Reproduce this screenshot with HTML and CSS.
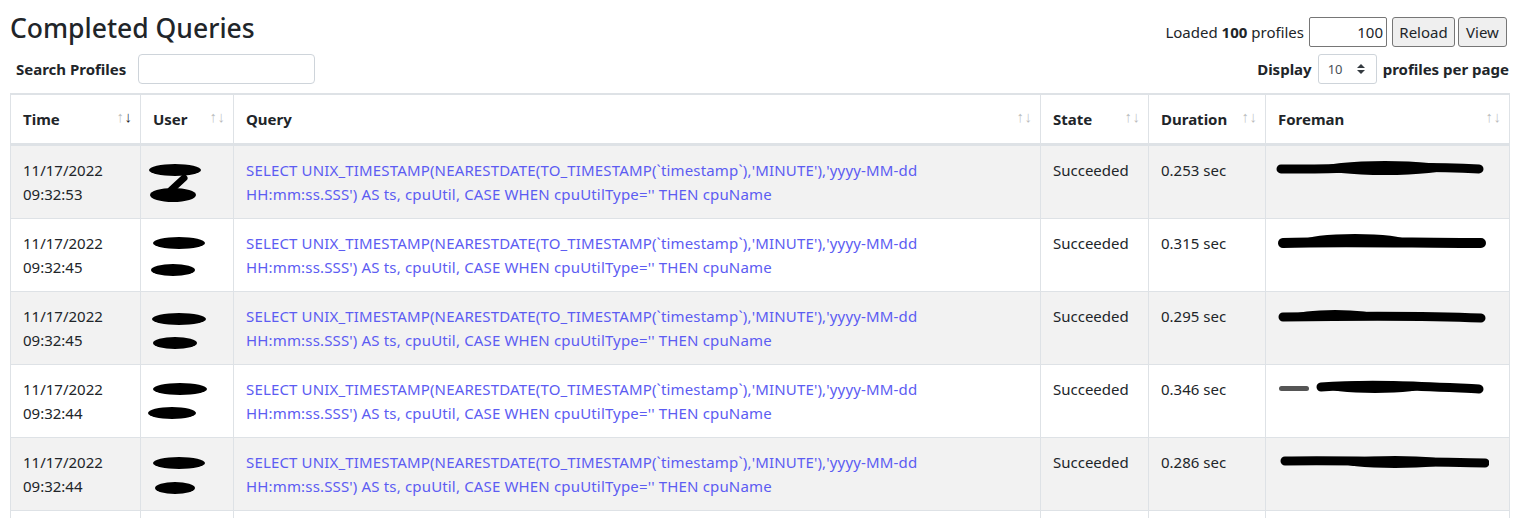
FILE: index.html
```html
<!DOCTYPE html>
<html lang="en">
<head>
  <meta charset="UTF-8">
  <meta name="viewport" content="width=device-width, initial-scale=1.0">
  <title>Completed Queries</title>
  <link rel="stylesheet" href="styles.css">
</head>
<body>
  <div class="page">
    <div class="top-row">
      <h3 class="title">Completed Queries</h3>
      <div class="loader">
        <span class="loaded">Loaded <b>100</b> profiles</span>
        <input class="max-input" type="text" value="100">
        <button class="btn btn-reload">Reload</button>
        <button class="btn btn-view">View</button>
      </div>
    </div>

    <div class="filter-row">
      <label class="search">
        <span class="label">Search Profiles</span>
        <input class="search-input" type="text">
      </label>
      <div class="display">
        <span class="label">Display</span>
        <span class="select-wrap">
          <select class="page-size">
            <option>10</option>
            <option>25</option>
            <option>50</option>
          </select>
          <svg class="select-arrows" width="8" height="10" viewBox="0 0 4 5"><path fill="#343a40" d="M2 0L0 2h4zm0 5L0 3h4z"/></svg>
        </span>
        <span class="label">profiles per page</span>
      </div>
    </div>

    <table class="profiles">
      <thead>
        <tr>
          <th class="col-time sort sort-desc">Time</th>
          <th class="col-user sort">User</th>
          <th class="col-query sort">Query</th>
          <th class="col-state sort">State</th>
          <th class="col-duration sort">Duration</th>
          <th class="col-foreman sort">Foreman</th>
        </tr>
      </thead>
      <tbody>
        <tr class="odd">
          <td>11/17/2022<br>09:32:53</td>
          <td>
            <svg class="redact-user" width="70" height="48" viewBox="0 0 70 48">
              <ellipse cx="28" cy="12" rx="26" ry="6"/>
              <path d="M37 20 L24 32" stroke="#000" stroke-width="7" stroke-linecap="round"/>
              <ellipse cx="26" cy="37" rx="23" ry="7"/>
            </svg>
          </td>
          <td><a class="query" href="#">SELECT UNIX_TIMESTAMP(NEARESTDATE(TO_TIMESTAMP(`timestamp`),'MINUTE'),'yyyy-MM-dd<br>HH:mm:ss.SSS') AS ts, cpuUtil, CASE WHEN cpuUtilType='' THEN cpuName</a></td>
          <td>Succeeded</td>
          <td>0.253 sec</td>
          <td>
            <svg class="redact-foreman" width="214" height="24" viewBox="0 0 214 24">
              <path d="M6 11 C 60 12, 120 6, 204 11" stroke="#000" stroke-width="9" stroke-linecap="round" fill="none"/>
              <ellipse cx="110" cy="10" rx="62" ry="7"/>
            </svg>
          </td>
        </tr>
        <tr>
          <td>11/17/2022<br>09:32:45</td>
          <td>
            <svg class="redact-user" width="70" height="48" viewBox="0 0 70 48">
              <ellipse cx="32" cy="12" rx="26" ry="6"/>
              <ellipse cx="26" cy="39" rx="22" ry="6"/>
            </svg>
          </td>
          <td><a class="query" href="#">SELECT UNIX_TIMESTAMP(NEARESTDATE(TO_TIMESTAMP(`timestamp`),'MINUTE'),'yyyy-MM-dd<br>HH:mm:ss.SSS') AS ts, cpuUtil, CASE WHEN cpuUtilType='' THEN cpuName</a></td>
          <td>Succeeded</td>
          <td>0.315 sec</td>
          <td>
            <svg class="redact-foreman" width="214" height="24" viewBox="0 0 214 24">
              <path d="M8 12 C 60 10, 140 12, 206 12" stroke="#000" stroke-width="10" stroke-linecap="round" fill="none"/>
              <ellipse cx="80" cy="9" rx="50" ry="6"/>
            </svg>
          </td>
        </tr>
        <tr class="odd">
          <td>11/17/2022<br>09:32:45</td>
          <td>
            <svg class="redact-user" width="70" height="48" viewBox="0 0 70 48">
              <ellipse cx="32" cy="15" rx="27" ry="6"/>
              <ellipse cx="28" cy="39" rx="22" ry="6"/>
            </svg>
          </td>
          <td><a class="query" href="#">SELECT UNIX_TIMESTAMP(NEARESTDATE(TO_TIMESTAMP(`timestamp`),'MINUTE'),'yyyy-MM-dd<br>HH:mm:ss.SSS') AS ts, cpuUtil, CASE WHEN cpuUtilType='' THEN cpuName</a></td>
          <td>Succeeded</td>
          <td>0.295 sec</td>
          <td>
            <svg class="redact-foreman" width="214" height="24" viewBox="0 0 214 24">
              <path d="M8 13 C 70 12, 140 11, 206 14" stroke="#000" stroke-width="9" stroke-linecap="round" fill="none"/>
              <ellipse cx="60" cy="11" rx="40" ry="5"/>
            </svg>
          </td>
        </tr>
        <tr>
          <td>11/17/2022<br>09:32:44</td>
          <td>
            <svg class="redact-user" width="70" height="48" viewBox="0 0 70 48">
              <ellipse cx="33" cy="12" rx="27" ry="6"/>
              <ellipse cx="25" cy="36" rx="24" ry="6"/>
            </svg>
          </td>
          <td><a class="query" href="#">SELECT UNIX_TIMESTAMP(NEARESTDATE(TO_TIMESTAMP(`timestamp`),'MINUTE'),'yyyy-MM-dd<br>HH:mm:ss.SSS') AS ts, cpuUtil, CASE WHEN cpuUtilType='' THEN cpuName</a></td>
          <td>Succeeded</td>
          <td>0.346 sec</td>
          <td>
            <svg class="redact-foreman" width="214" height="24" viewBox="0 0 214 24">
              <path d="M46 10 C 100 6, 160 10, 204 12" stroke="#000" stroke-width="9" stroke-linecap="round" fill="none"/>
              <ellipse cx="100" cy="10" rx="50" ry="6"/>
              <rect x="4" y="9" width="30" height="5" rx="2.5" fill="#555"/>
            </svg>
          </td>
        </tr>
        <tr class="odd">
          <td>11/17/2022<br>09:32:44</td>
          <td>
            <svg class="redact-user" width="70" height="48" viewBox="0 0 70 48">
              <ellipse cx="32" cy="13" rx="26" ry="6"/>
              <ellipse cx="28" cy="38" rx="20" ry="6"/>
            </svg>
          </td>
          <td><a class="query" href="#">SELECT UNIX_TIMESTAMP(NEARESTDATE(TO_TIMESTAMP(`timestamp`),'MINUTE'),'yyyy-MM-dd<br>HH:mm:ss.SSS') AS ts, cpuUtil, CASE WHEN cpuUtilType='' THEN cpuName</a></td>
          <td>Succeeded</td>
          <td>0.286 sec</td>
          <td>
            <svg class="redact-foreman" width="214" height="24" viewBox="0 0 214 24">
              <path d="M10 11 C 70 10, 150 12, 210 13" stroke="#000" stroke-width="9" stroke-linecap="round" fill="none"/>
              <ellipse cx="120" cy="12" rx="55" ry="6"/>
            </svg>
          </td>
        </tr>
        <tr>
          <td class="empty-cell"></td>
          <td></td>
          <td></td>
          <td></td>
          <td></td>
          <td></td>
        </tr>
      </tbody>
    </table>
  </div>
</body>
</html>
```

FILE: styles.css
```css
* {
  margin: 0;
  padding: 0;
  box-sizing: border-box;
}

body {
  font-family: "Noto Sans", "Open Sans", sans-serif;
  font-size: 15px;
  line-height: 24px;
  color: #212529;
  background: #fff;
}

.page {
  padding: 0 10px;
}

.top-row {
  display: flex;
  justify-content: space-between;
  align-items: flex-start;
  padding-top: 11px;
}

.title {
  font-size: 26.5px;
  font-weight: 500;
  line-height: 34px;
}

.loader {
  display: flex;
  align-items: center;
  margin-top: 6px;
  margin-right: 2px;
}

.loaded {
  margin-right: 5px;
}

.max-input {
  width: 78px;
  height: 30px;
  border: 1px solid #767676;
  border-radius: 2px;
  padding: 0 3px;
  text-align: right;
  font: inherit;
  color: #212529;
}

.btn {
  height: 30px;
  padding: 0;
  border: 1px solid #767676;
  border-radius: 3px;
  background: #efefef;
  font: inherit;
  color: #212529;
}

.btn-reload {
  width: 63px;
  margin-left: 5px;
}

.btn-view {
  width: 49px;
  margin-left: 3px;
}

.filter-row {
  display: flex;
  justify-content: space-between;
  align-items: center;
  margin-top: 7px;
}

.label {
  font-weight: 700;
}

.search {
  display: flex;
  align-items: center;
  padding-left: 6px;
}

.search-input {
  width: 177px;
  height: 30px;
  margin-left: 12px;
  border: 1px solid #ced4da;
  border-radius: 4px;
}

.display {
  display: flex;
  align-items: center;
}

.select-wrap {
  position: relative;
  margin: 0 6px;
}

.page-size {
  appearance: none;
  -webkit-appearance: none;
  width: 59px;
  height: 30px;
  padding: 0 9px;
  border: 1px solid #ced4da;
  border-radius: 3px;
  background: #fff;
  font: inherit;
  font-size: 13px;
  color: #495057;
}

.select-arrows {
  position: absolute;
  right: 12px;
  top: 10px;
  pointer-events: none;
}

.profiles {
  width: 1500px;
  margin-top: 9px;
  table-layout: fixed;
  border-collapse: separate;
  border-spacing: 0;
  border-top: 1px solid #dee2e6;
  border-left: 1px solid #dee2e6;
}

.profiles th,
.profiles td {
  padding: 12px;
  text-align: left;
  vertical-align: top;
  border-top: 1px solid #dee2e6;
  border-right: 1px solid #dee2e6;
}

.profiles th {
  position: relative;
  font-weight: 700;
  border-bottom: 2px solid #dee2e6;
  padding-right: 30px;
}

.sort::before,
.sort::after {
  position: absolute;
  bottom: 15px;
  font-weight: 400;
  color: #212529;
  opacity: 0.3;
}

.sort::before {
  content: "\2191";
  right: 16px;
}

.sort::after {
  content: "\2193";
  right: 8px;
}

.sort-desc::after {
  opacity: 1;
}

.col-time { width: 130px; }
.col-user { width: 93px; }
.col-query { width: 807px; }
.col-state { width: 108px; }
.col-duration { width: 117px; }
.col-foreman { width: 244px; }

.profiles tbody tr.odd {
  background: #f2f2f2;
}

.empty-cell {
  height: 73px;
}

.query {
  color: #5c5cf2;
  text-decoration: none;
  white-space: nowrap;
  letter-spacing: 0.16px;
}

.redact-user {
  display: block;
  margin-left: -6px;
  fill: #000;
}

.redact-foreman {
  display: block;
  margin-left: -3px;
  fill: #000;
}
```
